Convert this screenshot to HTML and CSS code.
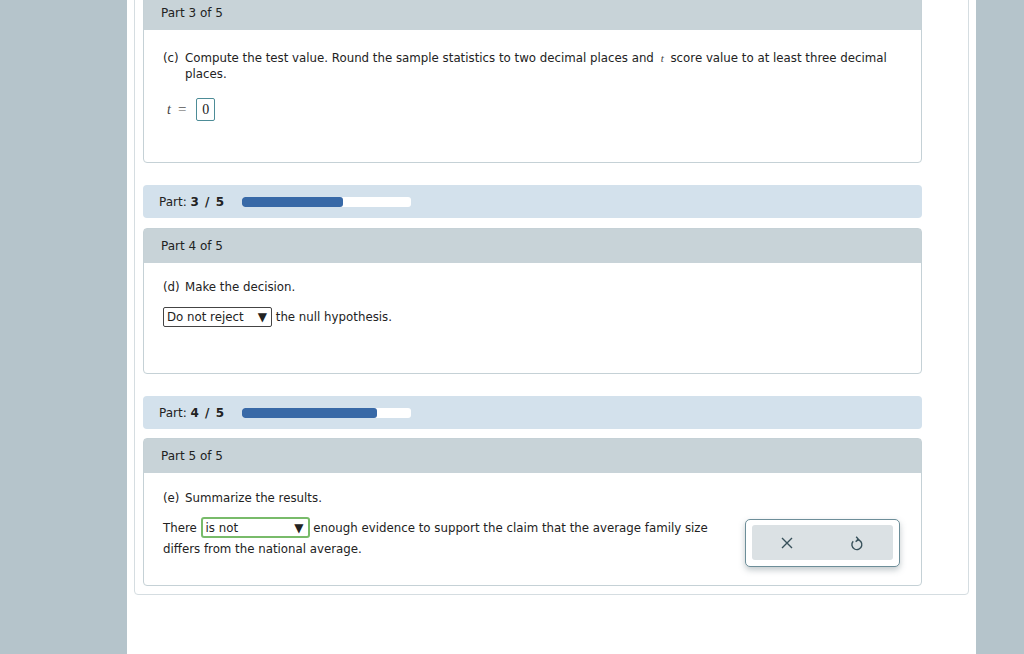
FILE: index.html
```html
<!DOCTYPE html>
<html lang="en">
<head>
  <meta charset="UTF-8">
  <title>Hypothesis Test</title>
  <link rel="stylesheet" href="styles.css">
</head>
<body>
  <div class="page">
    <div class="question">

      <div class="part first">
        <div class="part-head">Part 3 of 5</div>
        <div class="part-body">
          <div class="prompt"><span class="tag">(c)</span><span>Compute the test value. Round the sample statistics to two decimal places and <i class="var">t</i> score value to at least three decimal places.</span></div>
          <div class="answer-row">
            <i class="var big">t</i><span class="eq">=</span><span class="num-box">0</span>
          </div>
        </div>
      </div>

      <div class="progress">
        <span>Part: <b>3 / 5</b></span>
        <div class="track"><div class="fill" style="width: 60%;"></div></div>
      </div>

      <div class="part">
        <div class="part-head">Part 4 of 5</div>
        <div class="part-body">
          <div class="prompt"><span class="tag">(d)</span><span>Make the decision.</span></div>
          <div class="line">
            <span class="select">Do not reject <span class="arrow">&#9660;</span></span> the null hypothesis.
          </div>
        </div>
      </div>

      <div class="progress tight">
        <span>Part: <b>4 / 5</b></span>
        <div class="track"><div class="fill" style="width: 80%;"></div></div>
      </div>

      <div class="part last">
        <div class="part-head">Part 5 of 5</div>
        <div class="part-body">
          <div class="prompt"><span class="tag">(e)</span><span>Summarize the results.</span></div>
          <div class="line">
            There <span class="select ok">is not <span class="arrow">&#9660;</span></span> enough evidence to support the claim that the average family size<br>differs from the national average.
          </div>
        </div>

        <!-- clear / undo palette floating over the answer -->
        <div class="tools">
          <div class="tools-inner">
            <svg width="12" height="12" viewBox="0 0 12 12"><path d="M1 1 L11 11 M11 1 L1 11" stroke="#37505a" stroke-width="1.4" fill="none"/></svg>
            <svg width="14" height="16" viewBox="0 0 14 16"><path d="M3.2 6.2 A5 5 0 1 0 6.8 4.6" stroke="#37505a" stroke-width="1.4" fill="none"/><path d="M6.2 1.8 L8.6 4.6 L5.6 6.6" stroke="#37505a" stroke-width="1.4" fill="none"/></svg>
          </div>
        </div>
      </div>

    </div>
  </div>
</body>
</html>
```

FILE: styles.css
```css
body {
  margin: 0;
  background: #b5c4cb;
  font-family: "DejaVu Sans", Verdana, sans-serif;
  font-size: 12px;
  color: #222;
}
.page {
  margin-left: 127px;
  width: 849px;
  height: 654px;
  background: #fff;
  padding: 0 7px;
  box-sizing: border-box;
  overflow: hidden;
}
.question {
  margin-top: -20px;
  border: 1px solid #d5dde1;
  border-radius: 4px;
  padding: 14px 46px 8px 8px;
}
.part {
  border: 1px solid #c5d1d6;
  border-radius: 4px;
  position: relative;
}
.part-head {
  background: #c8d3d8;
  height: 34px;
  line-height: 34px;
  padding-left: 17px;
}
.part-body {
  padding: 16px 17px 0 19px;
  height: 94px;
  font-size: 11.8px;
}
.first .part-body {
  padding-top: 20px;
  height: 112px;
}
.last .part-body {
  padding-top: 17px;
  height: 95px;
}
.prompt {
  display: flex;
  line-height: 16px;
}
.tag {
  flex: 0 0 auto;
  width: 22px;
}
.var {
  font-family: "Liberation Serif", serif;
  font-style: italic;
  font-size: 11px;
  color: #444;
  padding: 0 3px;
}
.var.big {
  font-size: 14px;
  padding: 0;
}
.answer-row {
  display: flex;
  align-items: center;
  margin-top: 16px;
  padding-left: 4px;
}
.eq {
  font-family: "Liberation Serif", serif;
  font-size: 15px;
  color: #555;
  margin: 0 10px 0 7px;
}
.num-box {
  display: inline-block;
  width: 17px;
  height: 21px;
  line-height: 21px;
  border: 1px solid #4d8c97;
  border-radius: 2px;
  text-align: center;
  font-family: "Liberation Serif", serif;
  font-size: 14px;
}
.line {
  margin-top: 12px;
  line-height: 21px;
}
.select {
  display: inline-block;
  width: 104px;
  height: 18px;
  line-height: 18px;
  border: 1px solid #444;
  border-radius: 2px;
  padding-left: 3px;
  position: relative;
  vertical-align: middle;
  margin-top: -2px;
}
.select .arrow {
  position: absolute;
  right: 4px;
  top: 0;
  font-size: 12px;
}
.select.ok {
  border: 2px solid #78bb6a;
  border-radius: 3px;
  width: 102px;
  height: 17px;
}
.progress {
  margin: 22px 0 10px;
  height: 33px;
  background: #d3e1ec;
  border-radius: 4px;
  display: flex;
  align-items: center;
  padding-left: 16px;
}
.progress.tight {
  margin-bottom: 9px;
}
.progress b {
  letter-spacing: 1px;
}
.track {
  margin-left: 17px;
  width: 169px;
  height: 10px;
  background: #fff;
  border-radius: 3px;
  overflow: hidden;
}
.fill {
  height: 100%;
  background: #3869a7;
  border-radius: 3px;
}
.tools {
  position: absolute;
  left: 601px;
  top: 80px;
  width: 155px;
  height: 48px;
  box-sizing: border-box;
  border: 1px solid #6d8e99;
  border-radius: 5px;
  background: #fff;
  padding: 5px 6px 6px;
  box-shadow: 0 3px 6px rgba(80, 100, 110, 0.35);
}
.tools-inner {
  height: 100%;
  background: #dbe1e4;
  border-radius: 3px;
  display: flex;
  align-items: center;
  justify-content: space-around;
}
```
